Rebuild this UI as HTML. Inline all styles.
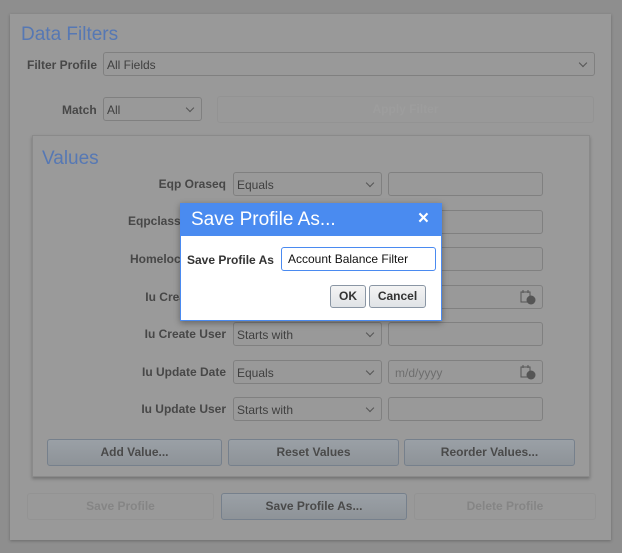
<!DOCTYPE html>
<html><head><style>
*{box-sizing:border-box;margin:0;padding:0}
body{width:622px;height:553px;background:#8e8e8e;font-family:"Liberation Sans",sans-serif;position:relative;overflow:hidden;font-size:12px;color:#3f3f3f}
.abs{position:absolute}
.panel{left:10px;top:14px;width:601px;height:526px;background:#999;box-shadow:0 1px 3px rgba(0,0,0,.25)}
.title{font-size:19px;color:#5678b4}
.lbl{font-weight:bold;color:#474747;text-align:right;font-size:12px}
.sel{border:1px solid #808080;border-radius:3px;background:#999;height:24px;padding:5px 3px;font-size:12px;color:#3f3f3f}
.sel:after{content:"";position:absolute;right:8px;top:7px;width:5px;height:5px;border-right:1px solid #555;border-bottom:1px solid #555;transform:rotate(45deg)}
.inp{border:1px solid #808080;border-radius:3px;background:#999;height:24px;padding:5px 6px;color:#6e6e6e}
.btn{border:1px solid #76808c;border-radius:3px;background:linear-gradient(#9aa0a6,#8e9398);font-weight:bold;color:#4a4a4a;text-align:center;line-height:25px}
.dis{border:1px solid #939393;border-radius:3px;background:#999;font-weight:bold;color:#858585;text-align:center;line-height:25px}
.cal{position:absolute;right:6px;top:4px;width:16px;height:15px}
</style></head><body>
<div class="abs panel"></div>
<div class="abs title" style="left:21px;top:24px">Data Filters</div>
<div class="abs lbl" style="left:27px;top:58px">Filter Profile</div>
<div class="abs sel" style="left:103px;top:52px;width:492px">All Fields</div>
<div class="abs lbl" style="left:62px;top:103px">Match</div>
<div class="abs sel" style="left:103px;top:97px;width:99px">All</div>
<div class="abs dis" style="left:217px;top:96px;width:377px;height:27px;color:#9d9d9d">Apply Filter</div>

<div class="abs" style="left:32px;top:135px;width:558px;height:342px;background:#9a9a9a;border:1px solid #8a8a8a;box-shadow:0 2px 3px rgba(0,0,0,.25)"></div>
<div class="abs title" style="left:42px;top:148px">Values</div>

<div class="abs lbl" style="left:60px;top:177px;width:166px">Eqp Oraseq</div>
<div class="abs sel" style="left:233px;top:172px;width:149px">Equals</div>
<div class="abs inp" style="left:388px;top:172px;width:155px"></div>

<div class="abs lbl" style="left:128px;top:214px;text-align:left;white-space:nowrap">Eqpclass Code</div>
<div class="abs inp" style="left:388px;top:210px;width:155px"></div>
<div class="abs lbl" style="left:130px;top:252px;text-align:left;white-space:nowrap">Homeloc Code</div>
<div class="abs inp" style="left:388px;top:247px;width:155px"></div>
<div class="abs lbl" style="left:60px;top:290px;width:166px">Iu Create Date</div>
<div class="abs inp" style="left:388px;top:285px;width:155px"><svg class="cal" viewBox="0 0 16 15"><rect x="1" y="2" width="9" height="10" fill="none" stroke="#555"/><line x1="3" y1="0" x2="3" y2="3" stroke="#555"/><line x1="8" y1="0" x2="8" y2="3" stroke="#555"/><circle cx="11" cy="10" r="4.5" fill="#555"/></svg></div>

<div class="abs lbl" style="left:60px;top:327px;width:166px">Iu Create User</div>
<div class="abs sel" style="left:233px;top:322px;width:149px">Starts with</div>
<div class="abs inp" style="left:388px;top:322px;width:155px"></div>

<div class="abs lbl" style="left:60px;top:365px;width:166px">Iu Update Date</div>
<div class="abs sel" style="left:233px;top:360px;width:149px">Equals</div>
<div class="abs inp" style="left:388px;top:360px;width:155px">m/d/yyyy<svg class="cal" viewBox="0 0 16 15"><rect x="1" y="2" width="9" height="10" fill="none" stroke="#555"/><line x1="3" y1="0" x2="3" y2="3" stroke="#555"/><line x1="8" y1="0" x2="8" y2="3" stroke="#555"/><circle cx="11" cy="10" r="4.5" fill="#555"/></svg></div>

<div class="abs lbl" style="left:60px;top:402px;width:166px">Iu Update User</div>
<div class="abs sel" style="left:233px;top:397px;width:149px">Starts with</div>
<div class="abs inp" style="left:388px;top:397px;width:155px"></div>

<div class="abs btn" style="left:47px;top:439px;width:175px;height:27px">Add Value...</div>
<div class="abs btn" style="left:228px;top:439px;width:171px;height:27px">Reset Values</div>
<div class="abs btn" style="left:404px;top:439px;width:171px;height:27px">Reorder Values...</div>

<div class="abs dis" style="left:27px;top:493px;width:187px;height:27px">Save Profile</div>
<div class="abs btn" style="left:221px;top:493px;width:186px;height:27px">Save Profile As...</div>
<div class="abs dis" style="left:414px;top:493px;width:182px;height:27px">Delete Profile</div>

<div class="abs" style="left:180px;top:203px;width:262px;height:118px;background:#fff;border:1px solid #4a8af0;box-shadow:0 2px 6px rgba(0,0,0,.35)">
  <div style="height:32px;background:#4a8bf0;color:#fff;font-size:19px;padding:5px 0 0 10px;position:relative">Save Profile As...<span style="position:absolute;right:12px;top:4px;font-size:19px;font-weight:bold">×</span></div>
  <div class="abs" style="left:6px;top:49px;font-weight:bold;color:#333">Save Profile As</div>
  <div class="abs" style="left:100px;top:43px;width:155px;height:24px;border:1px solid #4a8af0;border-radius:3px;padding:4px 6px;color:#111">Account Balance Filter</div>
  <div class="abs" style="left:149px;top:81px;width:36px;height:23px;border:1px solid #8a96a4;border-radius:3px;background:linear-gradient(#f4f4f4,#e0e3e6);font-weight:bold;text-align:center;line-height:21px;color:#333">OK</div>
  <div class="abs" style="left:188px;top:81px;width:57px;height:23px;border:1px solid #8a96a4;border-radius:3px;background:linear-gradient(#f4f4f4,#e0e3e6);font-weight:bold;text-align:center;line-height:21px;color:#333">Cancel</div>
</div>
</body></html>
